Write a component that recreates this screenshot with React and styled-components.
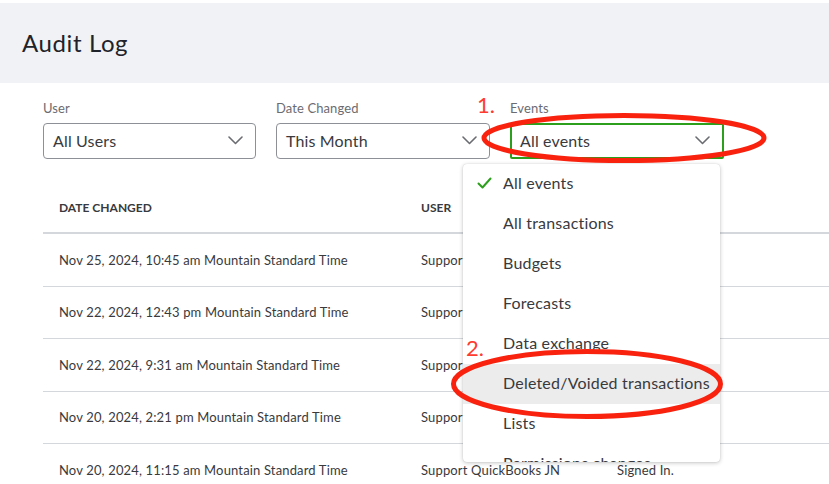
import React from "react";
import styled, { createGlobalStyle } from "styled-components";

const GlobalStyle = createGlobalStyle`
  html, body {
    margin: 0;
    padding: 0;
    background: #fff;
    font-family: "Lato", "Open Sans", Arial, sans-serif;
    color: #393a3d;
    overflow: hidden;
  }
`;

const Page = styled.div`
  position: relative;
  width: 829px;
  height: 484px;
  overflow: hidden;
`;

const Header = styled.div`
  margin-top: 3px;
  height: 80px;
  background: #f1f2f5;
  display: flex;
  align-items: center;
  padding-left: 22px;
`;

const Title = styled.h1`
  margin: 0 0 2px;
  font-size: 24px;
  letter-spacing: 0.6px;
  font-weight: 400;
  color: #21232a;
`;

const Filters = styled.div`
  display: flex;
  gap: 20px;
  padding: 16px 0 0 43px;
`;

const Field = styled.div`
  position: relative;
  display: flex;
  flex-direction: column;
  width: ${(p) => p.$w || 213}px;
`;

const Label = styled.label`
  font-size: 13px;
  letter-spacing: 0.1px;
  color: #6b6c72;
  line-height: 18px;
  margin-bottom: 6px;
`;

const SelectBox = styled.div`
  box-sizing: border-box;
  height: 36px;
  display: flex;
  align-items: center;
  justify-content: space-between;
  padding: 0 12px 1px ${(p) => (p.$active ? 8 : 9)}px;
  border: ${(p) => (p.$active ? "2px solid #2ca01c" : "1px solid #8d9096")};
  border-radius: ${(p) => (p.$active ? "2px" : "4px")};
  font-size: 16px;
  letter-spacing: 0.15px;
  color: #393a3d;
  background: #fff;
`;

const Menu = styled.ul`
  position: absolute;
  top: 65px;
  left: -47px;
  width: 257px;
  height: 298px;
  margin: 0;
  padding: 0;
  list-style: none;
  background: #fff;
  border-radius: 4px;
  box-shadow: 0 1px 4px rgba(0, 0, 0, 0.22), 0 0 1px rgba(0, 0, 0, 0.2);
  overflow: hidden;
  z-index: 5;
`;

const MenuItem = styled.li`
  position: relative;
  box-sizing: border-box;
  height: 40px;
  display: flex;
  align-items: center;
  padding: 0 0 3px 40px;
  font-size: 16px;
  letter-spacing: 0.2px;
  color: #393a3d;
  background: ${(p) => (p.$hover ? "#ececec" : "transparent")};
`;

const Check = styled.svg`
  position: absolute;
  left: 14px;
  top: 13px;
`;

const Table = styled.div`
  margin: 23px 0 0 43px;
`;

const Row = styled.div`
  box-sizing: border-box;
  display: grid;
  grid-template-columns: 362px 196px 1fr;
  align-items: center;
  height: ${(p) => (p.$head ? 52 : 52.5)}px;
  border-bottom: ${(p) => (p.$head ? "2px solid #d4d7dc" : "1px solid #d4d7dc")};
`;

const Cell = styled.div`
  padding-left: 16px;
  white-space: nowrap;
  font-size: ${(p) => (p.$head ? 12 : 13)}px;
  letter-spacing: ${(p) => (p.$head ? 0 : 0.15)}px;
  font-weight: ${(p) => (p.$head ? 700 : 400)};
  color: #393a3d;
`;

const Overlay = styled.svg`
  position: absolute;
  left: 0;
  top: 0;
  pointer-events: none;
  z-index: 10;
`;

const Step = styled.span`
  position: absolute;
  left: ${(p) => p.$x}px;
  top: ${(p) => p.$y}px;
  font-size: 22px;
  line-height: 22px;
  color: #ff3b30;
  z-index: 10;
`;

const Chevron = () => (
  <svg width="15" height="9" viewBox="0 0 15 9">
    <polyline
      points="1,1 7.5,7.5 14,1"
      fill="none"
      stroke="#6b6c72"
      strokeWidth="1.6"
      strokeLinecap="round"
      strokeLinejoin="round"
    />
  </svg>
);

const events = [
  "All events",
  "All transactions",
  "Budgets",
  "Forecasts",
  "Data exchange",
  "Deleted/Voided transactions",
  "Lists",
  "Permissions changes",
];

const rows = [
  "Nov 25, 2024, 10:45 am Mountain Standard Time",
  "Nov 22, 2024, 12:43 pm Mountain Standard Time",
  "Nov 22, 2024, 9:31 am Mountain Standard Time",
  "Nov 20, 2024, 2:21 pm Mountain Standard Time",
  "Nov 20, 2024, 11:15 am Mountain Standard Time",
];

export default function App() {
  return (
    <Page>
      <GlobalStyle />
      <Header>
        <Title>Audit Log</Title>
      </Header>

      <Filters>
        <Field $w={213}>
          <Label>User</Label>
          <SelectBox>
            All Users
            <Chevron />
          </SelectBox>
        </Field>
        <Field $w={214}>
          <Label>Date Changed</Label>
          <SelectBox>
            This Month
            <Chevron />
          </SelectBox>
        </Field>
        <Field $w={214}>
          <Label>Events</Label>
          <SelectBox $active>
            All events
            <Chevron />
          </SelectBox>
          <Menu>
            {events.map((e, i) => (
              <MenuItem key={e} $hover={i === 5}>
                {i === 0 && (
                  <Check width="15" height="12" viewBox="0 0 15 12">
                    <polyline
                      points="1.5,6.5 5.5,10.5 13.5,1.5"
                      fill="none"
                      stroke="#2ca01c"
                      strokeWidth="2"
                      strokeLinecap="round"
                      strokeLinejoin="round"
                    />
                  </Check>
                )}
                {e}
              </MenuItem>
            ))}
          </Menu>
        </Field>
      </Filters>

      <Table>
        <Row $head>
          <Cell $head>DATE CHANGED</Cell>
          <Cell $head>USER</Cell>
          <Cell $head>EVENT</Cell>
        </Row>
        {rows.map((d) => (
          <Row key={d}>
            <Cell>{d}</Cell>
            <Cell>Support QuickBooks JN</Cell>
            <Cell>Signed In.</Cell>
          </Row>
        ))}
      </Table>

      <Step $x={477} $y={94}>1.</Step>
      <Step $x={466} $y={337}>2.</Step>
      <Overlay width="829" height="484" viewBox="0 0 829 484">
        <ellipse cx="624" cy="138" rx="140" ry="22.5" fill="none" stroke="#f8220f" strokeWidth="5" />
        <ellipse cx="587" cy="384" rx="133.5" ry="32.5" fill="none" stroke="#f8220f" strokeWidth="5" />
      </Overlay>
    </Page>
  );
}
